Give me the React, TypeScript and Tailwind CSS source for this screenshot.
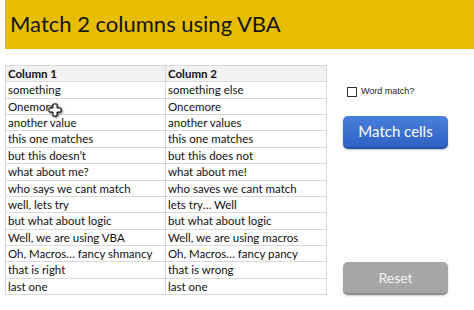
const rows: [string, string][] = [
  ["something", "something else"],
  ["Onemore", "Oncemore"],
  ["another value", "another values"],
  ["this one matches", "this one matches"],
  ["but this doesn’t", "but this does not"],
  ["what about me?", "what about me!"],
  ["who says we cant match", "who saves we cant match"],
  ["well, lets try", "lets try… Well"],
  ["but what about logic", "but what about logic"],
  ["Well, we are using VBA", "Well, we are using macros"],
  ["Oh, Macros… fancy shmancy", "Oh, Macros… fancy pancy"],
  ["that is right", "that is wrong"],
  ["last one", "last one"],
];

function CrossCursor() {
  return (
    <svg
      width="14"
      height="14"
      viewBox="0 0 14 14"
      className="absolute left-[42px] top-[4px] drop-shadow-[1px_1px_1px_rgba(0,0,0,0.6)]"
    >
      <path
        d="M5 1h4v4h4v4H9v4H5V9H1V5h4z"
        fill="#ffffff"
        stroke="#000000"
        strokeWidth="1"
      />
    </svg>
  );
}

export default function App() {
  return (
    <div
      className="w-[474px] h-[310px] bg-white overflow-hidden text-[#111111]"
      style={{ fontFamily: "Lato, 'Open Sans', sans-serif" }}
    >
      {/* Banner */}
      <div className="ml-[5px] h-[49px] bg-[#e6bd00] flex items-center pl-[5px] pb-[2px]">
        <h1 className="text-[22px] leading-none text-[#141414]">
          Match 2 columns using VBA
        </h1>
      </div>

      <div className="flex mt-[16px]">
        {/* Table */}
        <div className="ml-[5px] w-[322px] border-t border-l border-[#d9d9d9]">
          <div className="grid grid-cols-[160px_161px] bg-[#f2f2f2]">
            <div className="h-[16.36px] border-r border-b border-[#d9d9d9] pl-[2px] text-[11.5px] font-bold leading-[15px]">
              Column 1
            </div>
            <div className="h-[16.36px] border-r border-b border-[#d9d9d9] pl-[2px] text-[11.5px] font-bold leading-[15px]">
              Column 2
            </div>
          </div>
          {rows.map(([a, b], i) => (
            <div key={i} className="grid grid-cols-[160px_161px]">
              <div className="relative h-[16.36px] border-r border-b border-[#d9d9d9] pl-[2px] text-[11.5px] leading-[15px] whitespace-nowrap">
                {a}
                {i === 1 && <CrossCursor />}
              </div>
              <div className="h-[16.36px] border-r border-b border-[#d9d9d9] pl-[2px] text-[11.5px] leading-[15px] whitespace-nowrap">
                {b}
              </div>
            </div>
          ))}
        </div>

        {/* Controls */}
        <div className="ml-[16px] w-[106px] flex flex-col">
          <label className="mt-[20px] ml-[4px] flex items-center gap-[4px]">
            <span className="w-[10px] h-[10px] border border-[#333333] bg-white" />
            <span className="text-[9px] text-[#222222]" style={{ fontFamily: "'Liberation Sans', sans-serif" }}>
              Word match?
            </span>
          </label>
          <button className="mt-[17px] h-[33px] w-[105px] rounded-[5px] bg-gradient-to-b from-[#4a80dc] to-[#2f62c4] border-b-2 border-[#2653a8] text-white text-[15px] leading-none shadow-[0_1px_2px_rgba(0,0,0,0.25)]">
            Match cells
          </button>
          <button className="mt-auto h-[33px] w-[105px] rounded-[5px] bg-[#a6a6a6] border-b-2 border-[#8f8f8f] text-[#f4f4f4] text-[14px] leading-none shadow-[0_1px_2px_rgba(0,0,0,0.2)]">
            Reset
          </button>
        </div>
      </div>
    </div>
  );
}
